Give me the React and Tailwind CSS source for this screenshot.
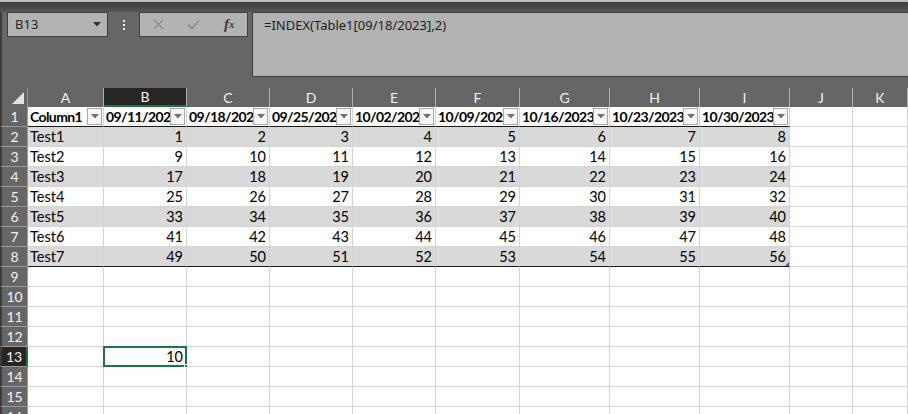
import React from "react";

const dates = ["09/11/2023", "09/18/2023", "09/25/2023", "10/02/2023", "10/09/2023", "10/16/2023", "10/23/2023", "10/30/2023"];
const letters = ["A", "B", "C", "D", "E", "F", "G", "H", "I", "J", "K"];
const rows = Array.from({ length: 16 }, (_, i) => i + 1);

const FilterButton = () => (
    <div className="shrink-0 w-[15px] h-[17px] mr-[1px] border border-[#a9a9a9] bg-[#f6f6f6] flex items-center justify-center">
        <svg width="8" height="5" viewBox="0 0 8 5">
            <path d="M0 0 L8 0 L4 4.5 Z" fill="#707070" />
        </svg>
    </div>
);

const Toolbar = () => (
    <div className="flex h-[76px] bg-[#666666] border-l-2 border-[#3c3c3c]">
        {/* name box */}
        <div className="ml-[5px] w-[101px] h-[25px] bg-[#b3b3b3] border border-[#3f3f3f] flex items-center pl-[7px] pr-[6px] text-[13px] text-[#262626]" style={{ fontFamily: '"Noto Sans", sans-serif' }}>
            <span className="flex-1">B13</span>
            <svg width="8" height="5" viewBox="0 0 8 5">
                <path d="M0 0 L8 0 L4 4.5 Z" fill="#333" />
            </svg>
        </div>
        <div className="w-[31px] h-[25px] flex flex-col items-center justify-center gap-[2px]">
            <div className="w-[2px] h-[2px] bg-[#f0f0f0]" />
            <div className="w-[2px] h-[2px] bg-[#f0f0f0]" />
            <div className="w-[2px] h-[2px] bg-[#f0f0f0]" />
        </div>
        {/* cancel / enter / fx */}
        <div className="w-[109px] h-[25px] bg-[#b3b3b3] border border-[#3f3f3f] flex items-center">
            <div className="w-[36px] flex justify-center pl-[2px]">
                <svg width="11" height="11" viewBox="0 0 11 11">
                    <path d="M1 1 L10 10 M10 1 L1 10" stroke="#8c8c8c" strokeWidth="1.4" />
                </svg>
            </div>
            <div className="w-[36px] flex justify-center">
                <svg width="13" height="11" viewBox="0 0 13 11">
                    <path d="M1 5.5 L5 9.5 L12 1.5" stroke="#8c8c8c" strokeWidth="1.8" fill="none" />
                </svg>
            </div>
            <div className="w-[36px] flex justify-center text-[#3a3a3a] italic font-bold" style={{ fontFamily: '"Liberation Serif", serif' }}>
                <span className="text-[15px]">f</span><span className="text-[11px] mt-[3px]">x</span>
            </div>
        </div>
        {/* formula bar */}
        <div className="ml-[4px] flex-1 h-[65px] bg-[#b2b2b2] border border-r-0 border-[#3f3f3f] pl-[11px] pt-[3px] text-[13px] text-[#1e1e1e]" style={{ fontFamily: '"Noto Sans", sans-serif' }}>
            =INDEX(Table1[09/18/2023],2)
        </div>
    </div>
);

const HeaderRow = () => (
    <>
        <div className="h-[19px] bg-[#666666] border-l-2 border-l-[#3c3c3c] border-r border-r-[#9a9a9a] flex items-end justify-end pr-[3px] pb-[3px]">
            <svg width="12" height="12" viewBox="0 0 12 12">
                <path d="M12 0 L12 12 L0 12 Z" fill="#e3e3e3" />
            </svg>
        </div>
        {letters.map((l) =>
            l === "B" ? (
                <div key={l} className="h-[19px] bg-[#262626] text-[#f2f2f2] border-r border-[#b0b0b0] border-b-2 border-b-[#217346] flex items-center justify-center text-[14px]">
                    {l}
                </div>
            ) : (
                <div key={l} className="h-[19px] bg-[#666666] text-[#f2f2f2] border-r border-[#b0b0b0] flex items-center justify-center text-[14px]">
                    {l}
                </div>
            )
        )}
    </>
);

const BodyCell = ({ r, c }) => {
    const inTable = r <= 8 && c <= 8;
    const band = inTable && r % 2 === 0;
    const blackBottom = inTable && (r === 1 || r === 8);
    const bg = band ? "bg-[#d9d9d9]" : "bg-white";
    const bottom = blackBottom ? "border-b-[#1a1a1a]" : "border-b-[#d4d4d4]";
    const base = `relative h-[20px] border-r border-r-[#d4d4d4] border-b ${bottom} ${bg} text-[14.5px] text-black leading-[20px] whitespace-nowrap overflow-hidden`;

    if (inTable && r === 1) {
        return (
            <div className={`${base} flex items-center font-bold`}>
                <span className="flex-1 min-w-0 overflow-hidden pl-[2px] text-[14px] tracking-[-0.6px]">{c === 0 ? "Column1" : dates[c - 1]}</span>
                <FilterButton />
            </div>
        );
    }
    if (inTable && c === 0) {
        return <div className={`${base} pl-[2px]`}>Test{r - 1}</div>;
    }
    if (inTable) {
        return (
            <div className={`${base} text-right pr-[3px]`}>
                {(r - 2) * 8 + c}
                {r === 8 && c === 8 && (
                    <svg className="absolute right-0 bottom-0" width="4" height="4" viewBox="0 0 4 4">
                        <path d="M4 0 L4 4 L0 4 Z" fill="#4f5fa8" />
                    </svg>
                )}
            </div>
        );
    }
    if (r === 13 && c === 1) {
        return (
            <div className={`${base} overflow-visible text-right pr-[3px]`}>
                10
                <div className="absolute -left-[1px] -top-[1px] -right-[1px] -bottom-[1px] border-2 border-[#217346]" />
                <div className="absolute -right-[3px] -bottom-[3px] w-[5px] h-[5px] bg-[#217346] border border-white" />
            </div>
        );
    }
    return <div className={base} />;
};

const App = () => {
    return (
        <div className="w-[908px] h-[414px] overflow-hidden bg-white" style={{ fontFamily: 'Lato, "Open Sans", sans-serif' }}>
            <div className="h-[2px] bg-[#bdbdbd]" />
            <div className="h-[10px] bg-gradient-to-b from-[#3c3c3c] to-[#565656]" />
            <Toolbar />
            <div className="grid grid-cols-[28px_76px_83px_83px_83px_83px_84px_90px_90px_90px_63px_1fr]">
                <HeaderRow />
                {rows.map((r) => (
                    <React.Fragment key={r}>
                        {r === 13 ? (
                            <div className="h-[20px] bg-[#262626] text-[#f2f2f2] border-l-2 border-l-[#3c3c3c] border-r-2 border-r-[#217346] border-b border-b-[#9a9a9a] flex items-center justify-center text-[14px]">
                                {r}
                            </div>
                        ) : (
                            <div className="h-[20px] bg-[#666666] text-[#f2f2f2] border-l-2 border-l-[#3c3c3c] border-r border-r-[#9a9a9a] border-b border-b-[#9a9a9a] flex items-center justify-center text-[14px]">
                                {r}
                            </div>
                        )}
                        {letters.map((l, c) => (
                            <BodyCell key={l} r={r} c={c} />
                        ))}
                    </React.Fragment>
                ))}
            </div>
        </div>
    );
};

export default App;
